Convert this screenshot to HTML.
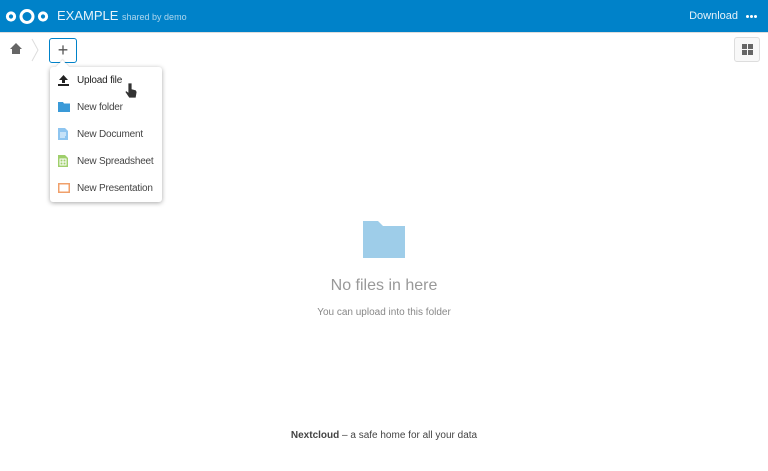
<!DOCTYPE html>
<html><head><style>
*{margin:0;padding:0;box-sizing:border-box}
body{width:768px;height:471px;background:#fff;font-family:"Liberation Sans",sans-serif;position:relative;overflow:hidden;color:#222}
.hdr{position:absolute;left:0;top:0;width:768px;height:32px;background:#0082c9;color:#fff}
.t{position:absolute;left:57px;top:8px;font-size:13px;color:#e6f2fa}
.t small{font-size:9px;opacity:.75}
.dl{position:absolute;right:30px;top:10px;font-size:11px;color:#e6f2fa}
.dots{position:absolute;right:11px;top:15px;display:flex;gap:1px;height:3px}
.dots i{display:block;width:3px;height:3px;background:#fff;border-radius:50%}
.bar{position:absolute;top:32px;left:0;width:768px;height:33px;border-top:1px solid #ddd}
.plus{position:absolute;left:49px;top:38px;width:28px;height:25px;border:1px solid #0082c9;border-radius:3px;background:#fff;text-align:center;font-size:18px;line-height:22px;color:#555}
.grid{position:absolute;right:8px;top:37px;width:26px;height:25px;border:1px solid #ddd;border-radius:3px;background:#f8f8f8}
.menu{position:absolute;left:50px;top:67px;width:112px;height:135px;background:#fff;border-radius:3px;box-shadow:0 1px 5px rgba(0,0,0,.35)}
.menu:before{content:"";position:absolute;left:8px;top:-5px;width:9px;height:9px;background:#fff;transform:rotate(45deg);box-shadow:-1px -1px 1px rgba(0,0,0,.1)}
.it{position:absolute;left:27px;font-size:10px;color:#444;letter-spacing:-.2px}
.ic{position:absolute;left:8px}
.empty{position:absolute;left:0;width:768px;text-align:center;color:#888}
</style></head><body>
<div class="hdr">
<svg style="position:absolute;left:4px;top:8px" width="46" height="17" viewBox="0 0 46 17"><g fill="none" stroke="#fff" stroke-width="3"><circle cx="7" cy="8.5" r="3.6"/><circle cx="23" cy="8.5" r="6"/><circle cx="39" cy="8.5" r="3.6"/></g></svg>
<div class="t">EXAMPLE <small>shared by demo</small></div>
<div class="dl">Download</div><div class="dots"><i></i><i></i><i></i></div>
</div>
<div class="bar"></div>
<svg style="position:absolute;left:10px;top:43px" width="12" height="11" viewBox="0 0 12 11"><path d="M6 0L0 6h2v5h8V6h2z" fill="#666"/></svg>
<svg style="position:absolute;left:30px;top:38px" width="10" height="24"><path d="M2 1l6 11-6 11" fill="none" stroke="#ddd"/></svg>
<div class="plus">+</div>
<div class="grid"><svg style="position:absolute;left:7px;top:6px" width="11" height="11"><g fill="#666"><rect width="5" height="5"/><rect x="6" width="5" height="5"/><rect y="6" width="5" height="5"/><rect x="6" y="6" width="5" height="5"/></g></svg></div>
<div class="menu">
<svg class="ic" style="top:8px" width="11" height="11"><path d="M5.5 0L1 5h3v3h3V5h3zM0 9h11v2H0z" fill="#222"/></svg>
<div class="it" style="top:8px;color:#222">Upload file</div>
<svg class="ic" style="top:35px" width="12" height="10"><path d="M0 0h5l1 1.5h6V10H0z" fill="#3a9ad8"/></svg>
<div class="it" style="top:35px">New folder</div>
<svg class="ic" style="top:61px" width="10" height="12"><path d="M0 0h7l3 3v9H0z" fill="#8ec5f0"/><path d="M2 5h6M2 7h6M2 9h5" stroke="#fff"/></svg>
<div class="it" style="top:62px">New Document</div>
<svg class="ic" style="top:88px" width="10" height="12"><path d="M0 0h7l3 3v9H0z" fill="#9fcf6b"/><path d="M2 4h6v6H2zM2 7h6M5 4v6" stroke="#fff" fill="none"/></svg>
<div class="it" style="top:89px">New Spreadsheet</div>
<svg class="ic" style="top:116px" width="12" height="10"><rect x=".75" y=".75" width="10.5" height="8.5" fill="none" stroke="#f0a06b" stroke-width="1.5"/></svg>
<div class="it" style="top:116px">New Presentation</div>
</div>
<svg style="position:absolute;left:124px;top:82px" width="14" height="18" viewBox="0 0 14 18"><path d="M4 1v9l-2-1.5L1 10l4 6h7l1-6-1-2-4-1V1z" fill="#333" stroke="#fff" stroke-width=".8"/></svg>
<svg style="position:absolute;left:363px;top:221px" width="42" height="37"><path d="M0 0h15l5 5h22v32H0z" fill="#9ecde9"/></svg>
<div class="empty" style="top:277px;font-size:16px;color:#999">No files in here</div>
<div class="empty" style="top:307px;font-size:10px;color:#888">You can upload into this folder</div>
<div class="empty" style="top:430px;font-size:10px;color:#444"><b>Nextcloud</b> – a safe home for all your data</div>
</body></html>
